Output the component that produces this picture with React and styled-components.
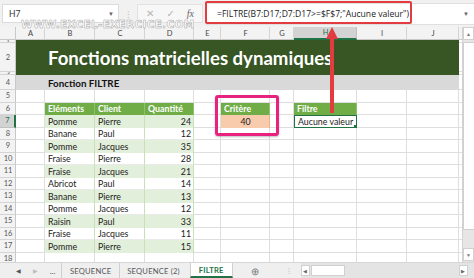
import React from "react";
import styled, { createGlobalStyle, css } from "styled-components";

const GlobalStyle = createGlobalStyle`
  html, body { margin: 0; padding: 0; background: #fff; }
  body { width: 474px; height: 278px; overflow: hidden; font-family: Lato, "Open Sans", sans-serif; }
  * { box-sizing: border-box; }
`;

const Screen = styled.div`
  position: relative;
  width: 474px;
  height: 278px;
  overflow: hidden;
  display: flex;
  flex-direction: column;
  background: #fff;
`;

/* ---------- formula bar ---------- */
const FormulaBar = styled.div`
  height: 27px;
  flex: none;
  display: flex;
  align-items: center;
  background: #f1f1f1;
  padding-left: 2px;
`;

const NameBox = styled.div`
  width: 117px;
  height: 19px;
  background: #fff;
  border: 1px solid #dcdcdc;
  display: flex;
  align-items: center;
  justify-content: space-between;
  padding: 0 4px 0 6px;
  font-size: 8.5px;
  color: #333;
`;

const Caret = styled.span`
  font-size: 6px;
  color: #666;
`;

const GripDots = styled.span`
  width: 18px;
  text-align: center;
  color: #c4c4c4;
  font-size: 10px;
`;

const FxGroup = styled.div`
  display: flex;
  align-items: center;
  height: 19px;
  width: 66px;
  background: #f7f7f7;
  border: 1px solid #e2e2e2;
  justify-content: space-around;
  padding: 0 2px;
`;

const FxIcon = styled.span`
  font-size: ${(p) => p.$size || 10}px;
  color: ${(p) => p.$color || "#b5b5b5"};
  font-family: ${(p) => (p.$serif ? '"Liberation Serif", serif' : '"DejaVu Sans", sans-serif')};
  font-style: ${(p) => (p.$serif ? "italic" : "normal")};
`;

const FormulaInput = styled.div`
  flex: 1;
  height: 22px;
  margin-left: 3px;
  background: #fff;
  border: 1px solid #e0e0e0;
  border-right: none;
  display: flex;
  align-items: center;
  justify-content: space-between;
  padding: 0 5px 0 10px;
  font-family: "Open Sans", sans-serif;
  font-size: 8.6px;
  color: #222;
`;

/* ---------- sheet ---------- */
const Body = styled.div`
  flex: 1;
  min-height: 0;
  display: flex;
`;

const Sheet = styled.div`
  flex: 1;
  overflow: hidden;
  display: grid;
  grid-template-columns: 16px 29px 50px 50px 49px 27px 49px 24px 63px 50px 52px 3px;
  grid-template-rows: 13px 3px 29px 3px 15px repeat(14, 12.5px);
  align-content: start;
`;

const variants = {
  plain: css`
    background: #fff;
    border-right: 1px solid #dedede;
    border-bottom: 1px solid #dedede;
  `,
  colHead: css`
    background: #f3f3f3;
    border-right: 1px solid #d4d4d4;
    border-bottom: 1px solid #c8c8c8;
    justify-content: center;
    color: #444;
    font-size: 7.5px;
  `,
  colHeadSel: css`
    background: #d3d3d3;
    border-right: 1px solid #c0c0c0;
    border-bottom: 2px solid #217346;
    justify-content: center;
    color: #217346;
    font-size: 7.5px;
  `,
  rowHead: css`
    background: #f3f3f3;
    border-right: 1px solid #c8c8c8;
    border-bottom: 1px solid #d4d4d4;
    justify-content: center;
    color: #555;
    font-size: 7.5px;
  `,
  rowHeadSel: css`
    background: #d3d3d3;
    border-right: 2px solid #217346;
    border-bottom: 1px solid #c0c0c0;
    justify-content: center;
    color: #217346;
    font-size: 7.5px;
  `,
  corner: css`
    background: #f3f3f3;
    border-right: 1px solid #c8c8c8;
    border-bottom: 1px solid #c8c8c8;
  `,
  title: css`
    background: #375623;
    color: #fff;
    font-weight: 700;
    font-size: 18.6px;
    padding-left: 32px;
  `,
  subtitle: css`
    background: #d9d9d9;
    color: #111;
    font-weight: 700;
    font-size: 9.8px;
    padding-left: 3px;
  `,
  greyPad: css`
    background: #d9d9d9;
  `,
  tableHead: css`
    background: #70ad47;
    color: #fff;
    font-weight: 700;
    border-right: 1px solid #8fc06b;
  `,
  band: css`
    background: #e2efda;
    border-right: 1px solid #c9dfba;
  `,
  white: css`
    background: #fff;
    border-right: 1px solid #c9dfba;
    border-bottom: 1px solid #eaeaea;
  `,
  orange: css`
    background: #f8cbad;
    justify-content: center;
    border-right: 1px solid #e9b18d;
  `,
  active: css`
    background: #fff;
    border: 1.5px solid #217346;
    position: relative;
    &::after {
      content: "";
      position: absolute;
      right: -3px;
      bottom: -3px;
      width: 4px;
      height: 4px;
      background: #217346;
      border: 1px solid #fff;
    }
  `,
};

const Cell = styled.div`
  display: flex;
  align-items: center;
  overflow: hidden;
  white-space: nowrap;
  font-size: 8.8px;
  color: #222;
  padding: 0 2px 0 3px;
  ${(p) => p.$right && css`justify-content: flex-end;`}
  ${(p) => variants[p.$v || "plain"]}
  ${(p) => p.$span && css`grid-column: span ${p.$span};`}
  ${(p) => p.$rows && css`grid-row: span ${p.$rows};`}
`;

/* ---------- right scrollbar ---------- */
const VScroll = styled.div`
  width: 12px;
  flex: none;
  background: #e6e6e6;
  border-left: 1px solid #d2d2d2;
  display: flex;
  flex-direction: column;
`;

const ScrollArrow = styled.div`
  height: 13px;
  flex: none;
  display: flex;
  align-items: center;
  justify-content: center;
  font-size: 5px;
  color: #777;
  background: #fff;
  border: 1px solid #d0d0d0;
  margin: ${(p) => p.$m || "0"};
`;

const VThumb = styled.div`
  height: 188px;
  margin: 2px 0 0 0;
  background: #fff;
  border: 1px solid #d0d0d0;
  border-right: none;
`;

const Spacer = styled.div`
  flex: 1;
`;

/* ---------- tab bar ---------- */
const TabBar = styled.div`
  height: 16px;
  flex: none;
  display: flex;
  align-items: stretch;
  background: #efefef;
  border-top: 1px solid #d6d6d6;
  padding-left: 10px;
  font-size: 7.6px;
  color: #555;
`;

const NavBtn = styled.div`
  width: 17px;
  display: flex;
  align-items: center;
  justify-content: center;
  font-size: ${(p) => p.$fs || 6}px;
  color: ${(p) => (p.$dim ? "#bdbdbd" : "#555")};
`;

const Tab = styled.div`
  display: flex;
  align-items: center;
  padding: 0 ${(p) => p.$pad || 8}px;
  border-left: 1px solid #cfcfcf;
  letter-spacing: 0.2px;
  ${(p) =>
    p.$active &&
    css`
      background: #fff;
      color: #217346;
      font-weight: 700;
      border-left: 1px solid #cfcfcf;
      border-right: 1px solid #cfcfcf;
      border-bottom: 2px solid #217346;
      margin-left: 3px;
      padding: 0 8px;
    `}
`;

const AddBtn = styled.div`
  width: 44px;
  display: flex;
  align-items: center;
  justify-content: center;
  font-size: 10px;
  color: #7a7a7a;
`;

const Grip = styled.div`
  width: 24px;
  display: flex;
  align-items: center;
  justify-content: center;
  color: #bbb;
  font-size: 8px;
`;

const HScroll = styled.div`
  width: 167px;
  display: flex;
  align-items: center;
  background: #e4e4e4;
  padding: 2px 0;
`;

const HArrow = styled.div`
  width: 9px;
  height: 11px;
  background: #fff;
  border: 1px solid #d0d0d0;
  display: flex;
  align-items: center;
  justify-content: center;
  font-size: 5px;
  color: #666;
`;

const HThumb = styled.div`
  width: 34px;
  height: 11px;
  background: #fff;
  border: 1px solid #d0d0d0;
  margin-left: 1px;
`;

const Corner = styled.div`
  flex: 1;
  background: #e4e4e4;
`;

/* ---------- overlays ---------- */
const Watermark = styled.div`
  position: absolute;
  left: 21px;
  top: 18px;
  font-family: "DejaVu Sans", sans-serif;
  font-weight: 700;
  font-size: 10.5px;
  letter-spacing: 0.3px;
  color: rgba(255, 255, 255, 0.9);
  -webkit-text-stroke: 0.5px rgba(140, 140, 140, 0.8);
  pointer-events: none;
`;

const FormulaHighlight = styled.div`
  position: absolute;
  left: 205px;
  top: 1px;
  width: 207px;
  height: 23px;
  border: 2px solid #e23b40;
  border-radius: 2px;
`;

const CritereHighlight = styled.div`
  position: absolute;
  left: 215px;
  top: 95px;
  width: 64px;
  height: 41px;
  border: 3px solid #e8227f;
  border-radius: 3px;
  box-shadow: 0 1px 2px rgba(0, 0, 0, 0.25);
`;

const ArrowSvg = styled.svg`
  position: absolute;
  left: 324px;
  top: 24px;
  overflow: visible;
`;

const COLS = ["A", "B", "C", "D", "E", "F", "G", "H", "I", "J"];

const data = [
  ["Pomme", "Pierre", 24],
  ["Banane", "Paul", 12],
  ["Pomme", "Jacques", 35],
  ["Fraise", "Pierre", 28],
  ["Fraise", "Jacques", 21],
  ["Abricot", "Paul", 14],
  ["Banane", "Pierre", 13],
  ["Pomme", "Jacques", 12],
  ["Raisin", "Paul", 33],
  ["Fraise", "Jacques", 11],
  ["Pomme", "Pierre", 15],
];

export default function App() {
  const rows = [];

  // column header
  rows.push(<Cell key="corner" $v="corner" />);
  COLS.forEach((c) =>
    rows.push(
      <Cell key={"h" + c} $v={c === "H" ? "colHeadSel" : "colHead"}>
        {c}
      </Cell>
    )
  );
  rows.push(<Cell key="hK" $v="colHead" />);

  // rows 1-3 title band
  rows.push(<Cell key="r1" $v="rowHead">1</Cell>);
  rows.push(
    <Cell key="title" $v="title" $span={10} $rows={3}>
      Fonctions matricielles dynamiques
    </Cell>
  );
  rows.push(<Cell key="k1" />);
  rows.push(<Cell key="r2" $v="rowHead">2</Cell>);
  rows.push(<Cell key="k2" />);
  rows.push(<Cell key="r3" $v="rowHead">3</Cell>);
  rows.push(<Cell key="k3" />);

  // row 4
  rows.push(<Cell key="r4" $v="rowHead">4</Cell>);
  rows.push(<Cell key="a4" $v="greyPad" />);
  rows.push(
    <Cell key="b4" $v="subtitle" $span={9}>
      Fonction FILTRE
    </Cell>
  );
  rows.push(<Cell key="k4" />);

  // row 5
  rows.push(<Cell key="r5" $v="rowHead">5</Cell>);
  for (let i = 0; i < 11; i++) rows.push(<Cell key={"c5" + i} />);

  // row 6
  rows.push(<Cell key="r6" $v="rowHead">6</Cell>);
  rows.push(<Cell key="a6" />);
  rows.push(<Cell key="b6" $v="tableHead">Eléments</Cell>);
  rows.push(<Cell key="c6" $v="tableHead">Client</Cell>);
  rows.push(<Cell key="d6" $v="tableHead">Quantité</Cell>);
  rows.push(<Cell key="e6" />);
  rows.push(<Cell key="f6" $v="tableHead">Critère</Cell>);
  rows.push(<Cell key="g6" />);
  rows.push(<Cell key="h6" $v="tableHead">Filtre</Cell>);
  rows.push(<Cell key="i6" />);
  rows.push(<Cell key="j6" />);
  rows.push(<Cell key="k6" />);

  // rows 7-17
  data.forEach(([el, cl, q], i) => {
    const r = 7 + i;
    const v = i % 2 === 0 ? "band" : "white";
    rows.push(
      <Cell key={"r" + r} $v={r === 7 ? "rowHeadSel" : "rowHead"}>
        {r}
      </Cell>
    );
    rows.push(<Cell key={"a" + r} />);
    rows.push(<Cell key={"b" + r} $v={v}>{el}</Cell>);
    rows.push(<Cell key={"c" + r} $v={v}>{cl}</Cell>);
    rows.push(<Cell key={"d" + r} $v={v} $right>{q}</Cell>);
    rows.push(<Cell key={"e" + r} />);
    rows.push(
      r === 7 ? (
        <Cell key={"f" + r} $v="orange">40</Cell>
      ) : (
        <Cell key={"f" + r} />
      )
    );
    rows.push(<Cell key={"g" + r} />);
    rows.push(
      r === 7 ? (
        <Cell key={"h" + r} $v="active">Aucune valeur</Cell>
      ) : (
        <Cell key={"h" + r} />
      )
    );
    rows.push(<Cell key={"i" + r} />);
    rows.push(<Cell key={"j" + r} />);
    rows.push(<Cell key={"k" + r} />);
  });

  // row 18
  rows.push(<Cell key="r18" $v="rowHead">18</Cell>);
  for (let i = 0; i < 11; i++) rows.push(<Cell key={"c18" + i} />);

  return (
    <>
      <GlobalStyle />
      <Screen>
        <FormulaBar>
          <NameBox>
            H7
            <Caret>▼</Caret>
          </NameBox>
          <GripDots>⁝</GripDots>
          <FxGroup>
            <FxIcon>✕</FxIcon>
            <FxIcon>✓</FxIcon>
            <FxIcon $serif $size={10} $color="#666">
              fx
            </FxIcon>
          </FxGroup>
          <FormulaInput>
            =FILTRE(B7:D17;D7:D17&gt;=$F$7;"Aucune valeur")
            <Caret>▼</Caret>
          </FormulaInput>
        </FormulaBar>

        <Body>
          <Sheet>{rows}</Sheet>
          <VScroll>
            <ScrollArrow>▲</ScrollArrow>
            <VThumb />
            <Spacer />
            <ScrollArrow $m="0 0 1px 0">▼</ScrollArrow>
          </VScroll>
        </Body>

        <TabBar>
          <NavBtn>◀</NavBtn>
          <NavBtn $dim>▶</NavBtn>
          <NavBtn $fs={8}>...</NavBtn>
          <Tab>SEQUENCE</Tab>
          <Tab $pad={7}>SEQUENCE (2)</Tab>
          <Tab $active>FILTRE</Tab>
          <AddBtn>⊕</AddBtn>
          <Grip>⁝</Grip>
          <HScroll>
            <HArrow>◀</HArrow>
            <HThumb />
            <Spacer />
            <HArrow>▶</HArrow>
          </HScroll>
          <Corner />
        </TabBar>

        <Watermark>WWW.EXCEL-EXERCICE.COM</Watermark>
        <FormulaHighlight />
        <CritereHighlight />
        <ArrowSvg width="16" height="90" viewBox="0 0 16 90">
          <polygon points="8,3 2,15 14,15" fill="#e23b40" />
          <rect x="6" y="14" width="4" height="75" fill="#e23b40" />
        </ArrowSvg>
      </Screen>
    </>
  );
}
